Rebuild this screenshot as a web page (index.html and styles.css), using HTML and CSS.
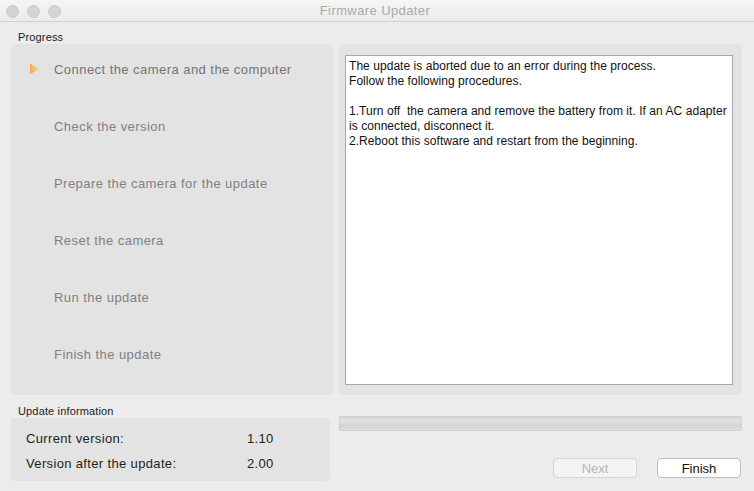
FILE: index.html
```html
<!DOCTYPE html>
<html lang="en">
<head>
	<meta charset="UTF-8">
	<title>Firmware Updater</title>
	<link rel="stylesheet" href="styles.css">
</head>
<body>
	<div class="window">
		<div class="titlebar">
			<div class="lights">
				<span class="light"></span><span class="light"></span><span class="light"></span>
			</div>
			<div class="title">Firmware Updater</div>
		</div>
		<div class="main">
			<div class="col_left">
				<div class="label">Progress</div>
				<ul class="steps">
					<li class="step current"><span class="arrow"></span>Connect the camera and the computer</li>
					<li class="step"><span class="arrow"></span>Check the version</li>
					<li class="step"><span class="arrow"></span>Prepare the camera for the update</li>
					<li class="step"><span class="arrow"></span>Reset the camera</li>
					<li class="step"><span class="arrow"></span>Run the update</li>
					<li class="step"><span class="arrow"></span>Finish the update</li>
				</ul>
				<div class="label label2">Update information</div>
				<div class="info">
					<div class="info_row"><span class="info_key">Current version:</span><span>1.10</span></div>
					<div class="info_row"><span class="info_key">Version after the update:</span><span>2.00</span></div>
				</div>
			</div>
			<div class="col_right">
				<div class="msg_panel">
					<div class="msg">
						<p>The update is aborted due to an error during the process.<br>Follow the following procedures.</p>
						<p>1.Turn off&nbsp; the camera and remove the battery from it. If an AC adapter is connected, disconnect it.<br>2.Reboot this software and restart from the beginning.</p>
					</div>
				</div>
				<div class="bar"></div>
				<div class="buttons">
					<button class="btn" disabled>Next</button>
					<button class="btn">Finish</button>
				</div>
			</div>
		</div>
	</div>
</body>
</html>
```

FILE: styles.css
```css
body{
	margin:0;
	font-family:"Liberation Sans",Arial,sans-serif;
	background:#ececec;
}
ul{
	margin:0;
	padding:0;
	list-style:none;
}
.window{
	width:754px;
	height:491px;
	background:#ececec;
	overflow:hidden;
}
.titlebar{
	height:21px;
	border-bottom:1px solid #d2d2d2;
	background:linear-gradient(#f6f6f6,#ebebeb);
	display:flex;
	align-items:center;
	position:relative;
}
.lights{
	display:flex;
	gap:8px;
	padding-left:6px;
	padding-top:2px;
}
.light{
	width:11px;
	height:11px;
	border-radius:50%;
	background:#d4d4d4;
	border:1px solid #c9c9c9;
}
.title{
	position:absolute;
	left:0;
	right:0;
	top:3px;
	text-align:center;
	font-size:13px;
	letter-spacing:0.4px;
	color:#a9a9a9;
	padding-right:4px;
}
.main{
	display:flex;
	padding-left:11px;
}
.col_left{
	width:322px;
	margin-right:6px;
}
.label{
	font-size:11px;
	letter-spacing:0.15px;
	color:#222;
	height:22px;
	line-height:30px;
	padding-left:7px;
}
.label2{
	height:23px;
	line-height:32px;
}
.steps{
	height:351px;
	box-sizing:border-box;
	background:#e3e3e3;
	border-radius:4px;
	padding:17px 0 0 19px;
	display:flex;
	flex-direction:column;
	gap:41px;
}
.step{
	display:flex;
	align-items:center;
	height:16px;
	font-size:13px;
	letter-spacing:0.45px;
	color:#808080;
}
.arrow{
	width:9px;
	height:11px;
	margin-right:15px;
}
.current .arrow{
	clip-path:polygon(0 0,100% 50%,0 100%);
	background:linear-gradient(90deg,#f4a857,#f9d2a0);
}
.current{
	color:#737373;
}
.info{
	width:319px;
	height:63px;
	box-sizing:border-box;
	background:#e3e3e3;
	border-radius:4px;
	padding:13px 0 0 15px;
	font-size:13px;
	letter-spacing:0.35px;
	color:#1e1e1e;
}
.info_row{
	display:flex;
	height:25px;
}
.info_key{
	width:221px;
}
.col_right{
	width:403px;
	padding-top:22px;
}
.msg_panel{
	height:351px;
	box-sizing:border-box;
	background:#e3e3e3;
	border-radius:4px;
	padding:11px 9px 10px 6px;
}
.msg{
	height:100%;
	box-sizing:border-box;
	background:#fff;
	border:1px solid #a9a9a9;
	padding:3px 3px;
	font-size:12px;
	letter-spacing:0.05px;
	line-height:15px;
	color:#111;
}
.msg p{
	margin:0 0 15px;
}
.bar{
	margin-top:21px;
	height:15px;
	box-sizing:border-box;
	border:1px solid #cfcfcf;
	border-radius:2px;
	background:linear-gradient(#d6d6d6,#e2e2e2 30%,#d3d3d3 60%,#dedede);
}
.buttons{
	display:flex;
	justify-content:flex-end;
	gap:20px;
	margin-top:27px;
	padding-right:1px;
}
.btn{
	width:84px;
	height:20px;
	box-sizing:border-box;
	background:#fff;
	border:1px solid #bcbcbc;
	border-radius:4px;
	font-family:"Liberation Sans",Arial,sans-serif;
	font-size:13px;
	color:#111;
	padding:0;
}
.btn:disabled{
	background:#f4f4f4;
	border-color:#d4d4d4;
	color:#b4b4b4;
}
```
